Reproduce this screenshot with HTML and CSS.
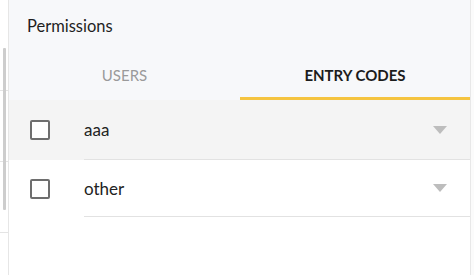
FILE: index.html
```html
<!DOCTYPE html>
<html>
<head>
<meta charset="utf-8">
<link rel="stylesheet" href="styles.css">
</head>
<body>
<div class="page">
  <div class="side">
    <div class="thumb"></div>
  </div>
  <div class="panel">
    <div class="header">
      <div class="title">Permissions</div>
      <div class="tabs">
        <div class="tab">USERS</div>
        <div class="tab active">ENTRY CODES</div>
      </div>
    </div>
    <div class="list">
      <div class="row hover first">
        <div class="check-cell"><span class="box"></span></div>
        <div class="main"><span class="label">aaa</span><span class="caret"></span></div>
      </div>
      <div class="row">
        <div class="check-cell"><span class="box"></span></div>
        <div class="main"><span class="label">other</span><span class="caret"></span></div>
      </div>
    </div>
  </div>
  <div class="edge"></div>
</div>
</body>
</html>
```
FILE: styles.css
```css
html, body {
  margin: 0;
  padding: 0;
  background: #ffffff;
}
body {
  font-family: Lato, "Open Sans", sans-serif;
  width: 474px;
  height: 275px;
  overflow: hidden;
}
.page {
  display: flex;
  height: 275px;
}
.side {
  width: 8px;
  border-right: 1px solid #e6e6e6;
  padding-top: 48px;
  box-sizing: content-box;
  background-image:
    linear-gradient(#e4e4e4, #e4e4e4),
    linear-gradient(#e4e4e4, #e4e4e4),
    linear-gradient(#e4e4e4, #e4e4e4);
  background-size: 100% 1px;
  background-repeat: no-repeat;
  background-position: 0 90px, 0 161px, 0 232px;
}
.thumb {
  margin-left: 3px;
  width: 3px;
  height: 162px;
  background: #cdcdcd;
  border-radius: 1px;
}
.panel {
  width: 461px;
  border-right: 1px solid #e8e8e8;
  display: flex;
  flex-direction: column;
}
.edge {
  flex: 1;
  background: #fbfbfb;
}
.header {
  background: #f7f8fa;
}
.title {
  height: 50px;
  line-height: 52px;
  padding-left: 18px;
  font-size: 16.5px;
  color: #1f1f1f;
}
.tabs {
  display: flex;
  height: 50px;
}
.tab {
  flex: 1;
  text-align: center;
  font-size: 15px;
  line-height: 50px;
  color: #9a9a9a;
  border-bottom: 3px solid transparent;
  box-sizing: border-box;
}
.tab:first-child {
  flex: 0 0 231px;
}
.tab.active {
  color: #1c1c1c;
  font-weight: 700;
  border-bottom-color: #f5c440;
}
.list {
  display: flex;
  flex-direction: column;
}
.row {
  display: flex;
  height: 57px;
}
.row.first {
  height: 60px;
}
.row.hover {
  background: #f4f4f4;
}
.check-cell {
  width: 75px;
  display: flex;
  align-items: center;
  padding-left: 21px;
  box-sizing: border-box;
}
.box {
  width: 20px;
  height: 20px;
  box-sizing: border-box;
  border: 2px solid #6e6e6e;
  border-radius: 2px;
  background: #fff;
}
.main {
  flex: 1;
  display: flex;
  align-items: center;
  justify-content: space-between;
  border-bottom: 1px solid #e2e2e2;
  padding-right: 23px;
}
.label {
  font-size: 17px;
  color: #222;
}
.caret {
  width: 0;
  height: 0;
  border-left: 7px solid transparent;
  border-right: 7px solid transparent;
  border-top: 8px solid #bdbdbd;
}
```
